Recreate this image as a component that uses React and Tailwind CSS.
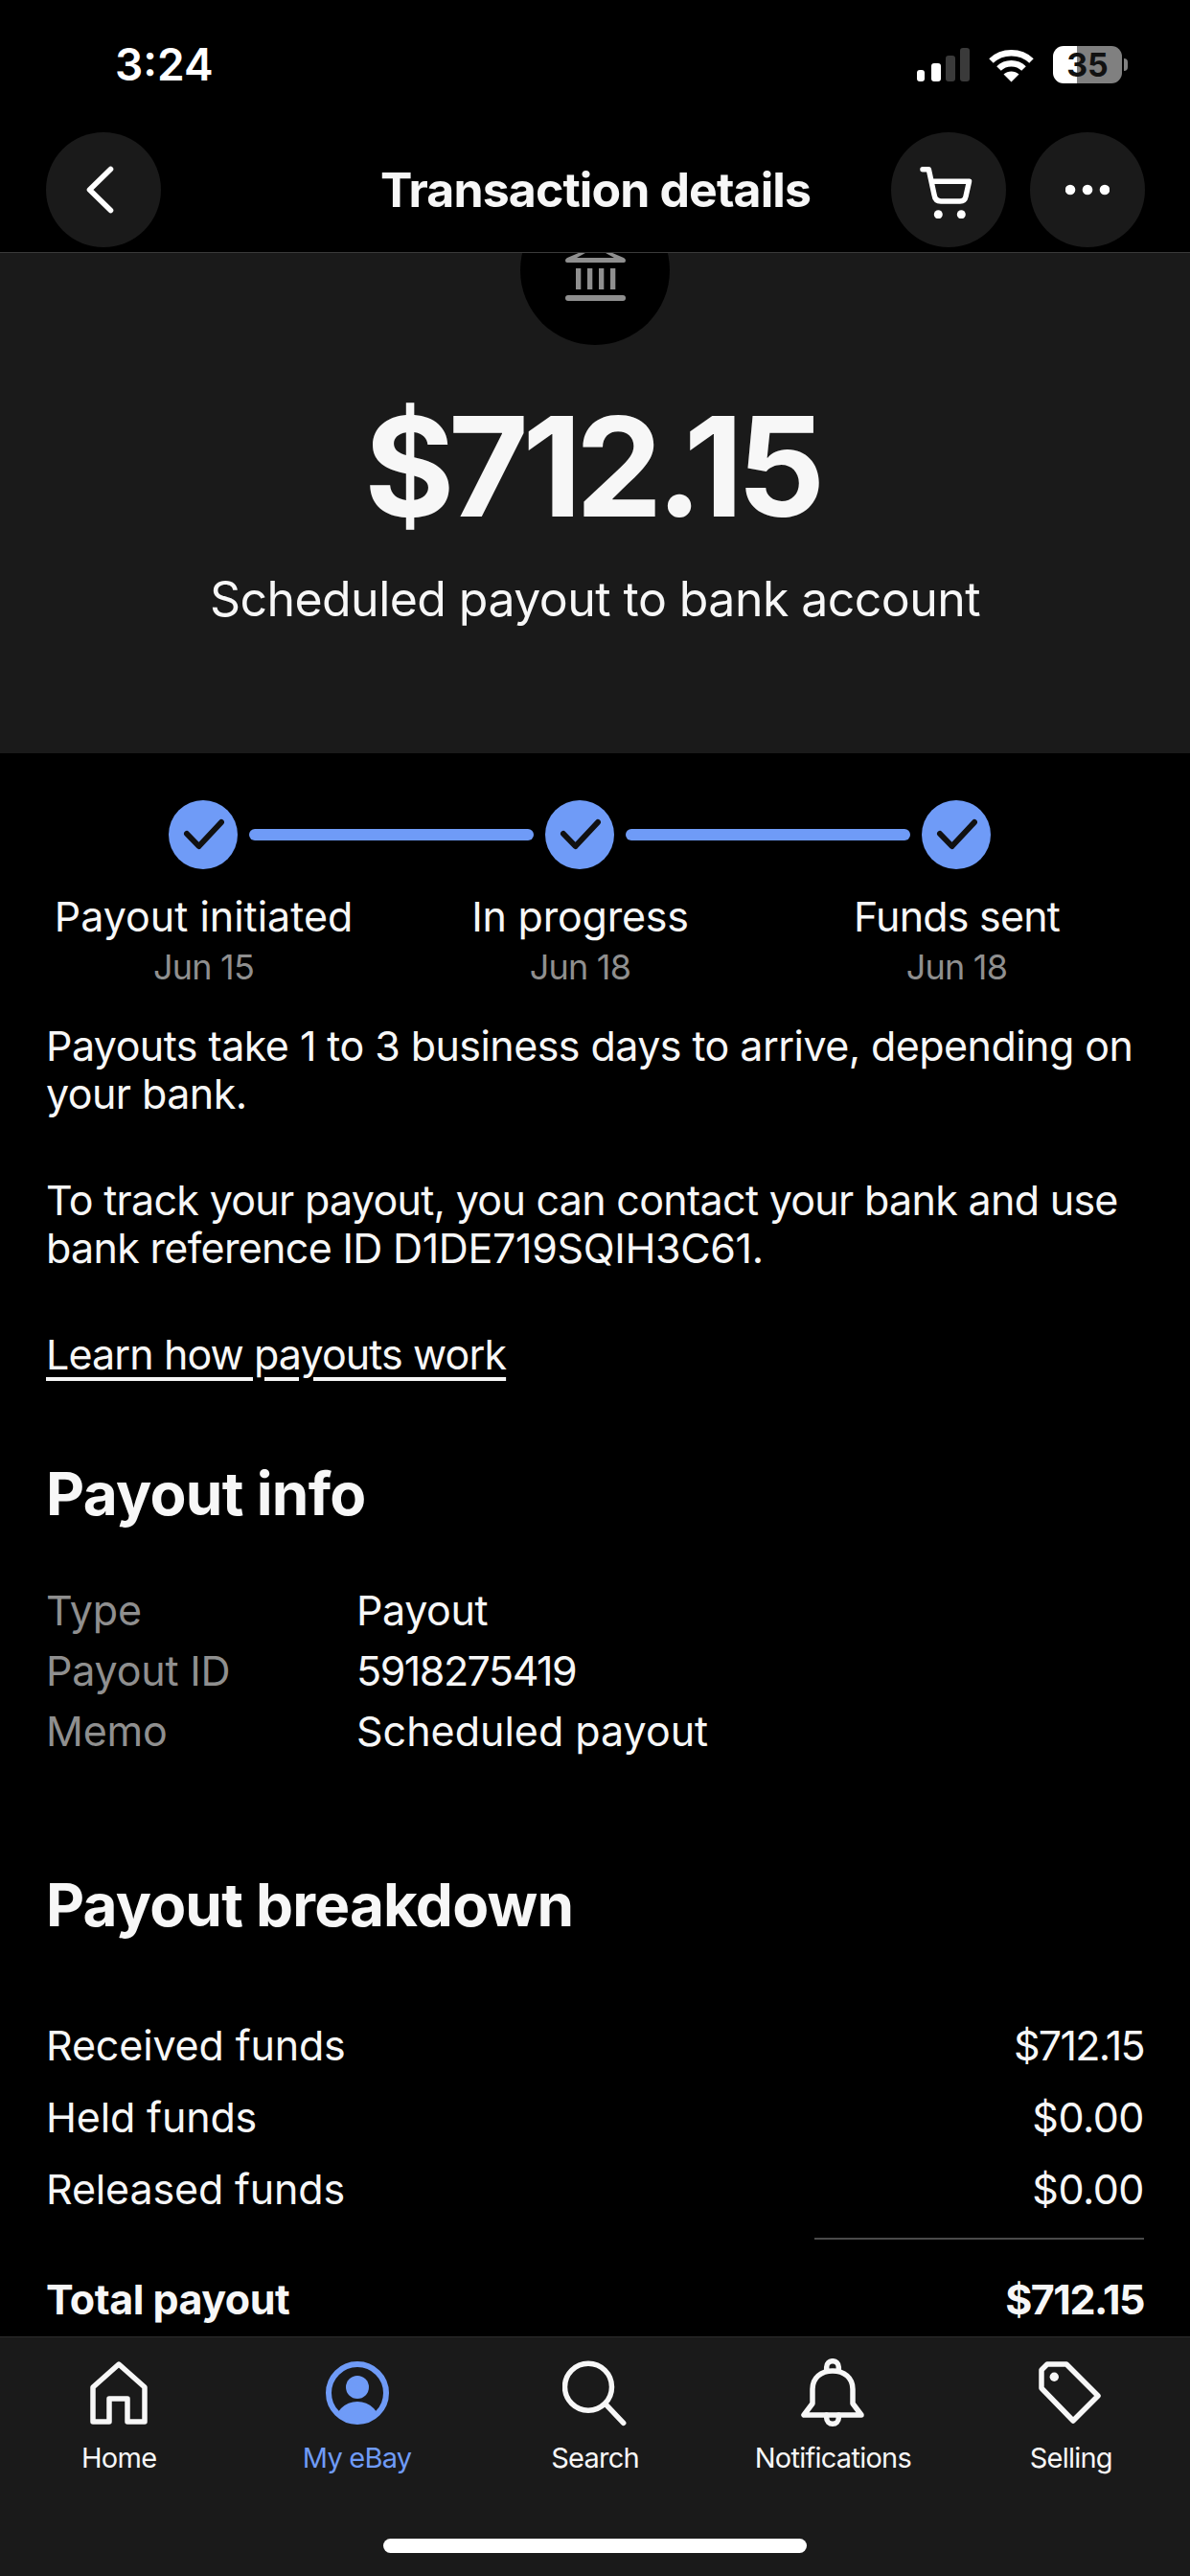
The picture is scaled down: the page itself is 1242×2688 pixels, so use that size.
import React from 'react';

const font = { fontFamily: 'Inter, "Liberation Sans", sans-serif' };

const StatusIcons = () => (
  <div className="flex items-center">
    <svg width="56" height="36" viewBox="0 0 56 36" fill="#fff">
      <rect x="1" y="23" width="8" height="12" rx="3" />
      <rect x="16" y="16" width="10" height="19" rx="3" />
      <rect x="31" y="8" width="10" height="27" rx="3" fill="#3a3a3a" />
      <rect x="46" y="0" width="10" height="35" rx="3" fill="#3a3a3a" />
    </svg>
    <svg className="ml-[20px]" width="47" height="36" viewBox="0 0 47 36" fill="none" stroke="#fff" strokeWidth="6.5">
      <path d="M2.5 13.5C14 2.5 33 2.5 44.5 13.5" />
      <path d="M10.5 21.5C17.5 14.5 29.5 14.5 36.5 21.5" />
      <path d="M23.5 35.5L15.5 27.5C20 23.5 27 23.5 31.5 27.5Z" fill="#fff" stroke="none" />
    </svg>
    <div className="ml-[20px] flex h-[39px] w-[72px] items-center justify-center rounded-[11px] bg-[linear-gradient(90deg,#fff_0,#fff_35%,#808080_35%,#808080_100%)] text-[34px] font-bold leading-none text-[#111]">
      35
    </div>
    <div className="ml-[2px] h-[13px] w-[4px] rounded-r-full bg-[#808080]" />
  </div>
);

const RoundButton = ({ children }) => (
  <div className="flex h-[120px] w-[120px] items-center justify-center rounded-full bg-[#1a1a1a]">
    {children}
  </div>
);

const Header = () => (
  <div className="border-b border-[#3a3a3a]">
    <div className="flex h-[138px] items-start justify-between pl-[120px] pr-[65px] pt-[43px]">
      <span className="text-[46px] font-semibold leading-[48px] text-white">3:24</span>
      <div className="pt-[5px]"><StatusIcons /></div>
    </div>
    <div className="grid h-[125px] grid-cols-[1fr_auto_1fr] pl-[48px] pr-[47px]">
      <RoundButton>
        <svg className="mr-[9px]" width="30" height="52" viewBox="0 0 30 52" fill="none" stroke="#fff" strokeWidth="5.6" strokeLinecap="round" strokeLinejoin="round">
          <path d="M26.5 4.5L4.5 26L26.5 47.5" />
        </svg>
      </RoundButton>
      <div className="flex h-[120px] items-center text-[50px] font-bold tracking-[-0.9px] text-[#f7f7f7]">
        Transaction details
      </div>
      <div className="flex justify-end gap-[25px]">
        <RoundButton>
          <svg width="60" height="60" viewBox="0 0 60 60" fill="none" stroke="#fff" strokeWidth="5.5" strokeLinecap="round" strokeLinejoin="round">
            <path d="M3 8.7H9.3L15 35Q16 42 22 42H42Q47 42 48 37L51.5 21.3H12.5" />
            <circle cx="19.3" cy="55.7" r="4.5" fill="#fff" stroke="none" />
            <circle cx="43.3" cy="55.7" r="4.5" fill="#fff" stroke="none" />
          </svg>
        </RoundButton>
        <RoundButton>
          <svg width="46" height="12" viewBox="0 0 46 12" fill="#fff">
            <circle cx="5" cy="6" r="5.3" />
            <circle cx="23" cy="6" r="5.3" />
            <circle cx="41" cy="6" r="5.3" />
          </svg>
        </RoundButton>
      </div>
    </div>
  </div>
);

const Hero = () => (
  <div className="flex h-[522px] flex-col items-center overflow-hidden bg-[#1a1a1a]">
    <div className="mt-[-60px] flex h-[156px] w-[156px] shrink-0 items-center justify-center rounded-full bg-black">
      <svg className="mt-[8px] overflow-visible" width="63" height="56" viewBox="0 0 63 56" fill="#8f8f8f">
        <path fillRule="evenodd" d="M31.5 -1.5L61 11Q63 12 63 14Q63 16 61 16H2Q0 16 0 14Q0 12 2 11ZM31.5 0L12 11H51Z" />
        <rect x="11" y="22" width="5.3" height="22" />
        <rect x="23" y="22" width="5.3" height="22" />
        <rect x="35" y="22" width="5.3" height="22" />
        <rect x="47" y="22" width="5.3" height="22" />
        <rect x="0" y="50" width="63" height="6" rx="3" />
      </svg>
    </div>
    <div className="mt-[52px] pr-[7px] text-[144px] font-bold leading-[150px] tracking-[-6.5px] text-[#f7f7f7]">$712.15</div>
    <div className="mt-[33px] text-[50px] leading-[60px] tracking-[-0.55px] text-[#f7f7f7]">Scheduled payout to bank account</div>
  </div>
);

const Check = () => (
  <div className="flex h-[72px] w-[72px] shrink-0 items-center justify-center rounded-full bg-[#6f9bf7]">
    <svg width="44" height="34" viewBox="0 0 44 34" fill="none" stroke="#111" strokeWidth="6" strokeLinecap="round" strokeLinejoin="round">
      <path d="M5 16L17.6 29L41 4" />
    </svg>
  </div>
);

const steps = [
  { label: 'Payout initiated', date: 'Jun 15', tracking: 'tracking-[0px]' },
  { label: 'In progress', date: 'Jun 18', tracking: 'tracking-[-0.2px]' },
  { label: 'Funds sent', date: 'Jun 18', tracking: 'tracking-[-0.8px]' },
];

const Stepper = () => (
  <div className="pt-[49px]">
    <div className="flex items-center pl-[176px]">
      <Check />
      <div className="mx-[12px] h-[12px] w-[297px] rounded-full bg-[#6f9bf7]" />
      <Check />
      <div className="mx-[12px] h-[12px] w-[297px] rounded-full bg-[#6f9bf7]" />
      <Check />
    </div>
    <div className="mt-[24px] grid grid-cols-[393px_393px_393px] pl-[16px]">
      {steps.map((s) => (
        <div key={s.label} className="text-center">
          <div className={`text-[43px] leading-[50px] text-[#f7f7f7] ${s.tracking}`}>{s.label}</div>
          <div className="mt-[6px] text-[36px] leading-[44px] tracking-[-0.8px] text-[#8f8f8f]">{s.date}</div>
        </div>
      ))}
    </div>
  </div>
);

const info = [
  ['Type', 'Payout', 'tracking-[-0.4px]'],
  ['Payout ID', '5918275419', 'tracking-[-1.5px]'],
  ['Memo', 'Scheduled payout', 'tracking-[0px]'],
];

const breakdown = [
  ['Received funds', '$712.15', 'tracking-[-1.7px]'],
  ['Held funds', '$0.00', 'tracking-[-0.5px]'],
  ['Released funds', '$0.00', 'tracking-[-0.5px]'],
];

const Body = () => (
  <div className="px-[48px] text-[#f7f7f7]">
    <p className="mt-[35px] text-[43px] leading-[50px] tracking-[-0.56px]">
      Payouts take 1 to 3 business days to arrive, depending on your bank.
    </p>
    <p className="mt-[61px] text-[43px] leading-[50px] tracking-[-0.7px]">
      To track your payout, you can contact your bank and use bank reference ID <span className="tracking-[-0.35px]">D1DE719SQIH3C61.</span>
    </p>
    <div className="mt-[61px] text-[43px] leading-[50px] tracking-[-0.9px] underline underline-offset-[8px]">Learn how payouts work</div>

    <h2 className="mt-[83px] text-[62px] font-bold leading-[76px] tracking-[-0.7px]">Payout info</h2>
    <div className="mt-[52px] grid grid-cols-[324px_1fr] text-[43px] leading-[63px]">
      {info.map(([k, v, tracking]) => (
        <React.Fragment key={k}>
          <span className="tracking-[-0.2px] text-[#8f8f8f]">{k}</span>
          <span className={tracking}>{v}</span>
        </React.Fragment>
      ))}
    </div>

    <h2 className="mt-[112px] text-[62px] font-bold leading-[76px] tracking-[-0.8px]">Payout breakdown</h2>
    <div className="mt-[71px] text-[43px] leading-[75px]">
      {breakdown.map(([k, v, tracking]) => (
        <div key={k} className="flex justify-between">
          <span className="tracking-[-0.15px]">{k}</span>
          <span className={tracking}>{v}</span>
        </div>
      ))}
    </div>
    <div className="ml-auto mt-[13px] h-[2px] w-[344px] bg-[#4a4a4a]" />
    <div className="mt-[32px] flex justify-between text-[43px] font-bold leading-[60px]">
      <span className="tracking-[-0.5px]">Total payout</span>
      <span className="tracking-[-1.5px]">$712.15</span>
    </div>
  </div>
);

const HomeIcon = () => (
  <svg width="62" height="72" viewBox="0 0 62 72" fill="none" stroke="#f7f7f7" strokeWidth="5.5" strokeLinejoin="round">
    <path d="M4 66V30L31 6L58 30V66H40V42H21V66Z" />
  </svg>
);

const PersonIcon = () => (
  <svg width="68" height="72" viewBox="0 0 68 72">
    <defs>
      <clipPath id="ring"><circle cx="34" cy="36" r="31" /></clipPath>
    </defs>
    <circle cx="34" cy="36" r="30" fill="none" stroke="#6f9bf7" strokeWidth="6" />
    <circle cx="34" cy="30" r="12" fill="#6f9bf7" />
    <circle cx="34" cy="69" r="24" fill="#6f9bf7" clipPath="url(#ring)" />
  </svg>
);

const SearchIcon = () => (
  <svg width="68" height="72" viewBox="0 0 68 72" fill="none" stroke="#f7f7f7" strokeWidth="5.5" strokeLinecap="round">
    <circle cx="27" cy="29.7" r="24.5" />
    <path d="M45.7 48.3L63.7 67.3" />
  </svg>
);

const BellIcon = () => (
  <svg width="68" height="72" viewBox="0 0 68 72" fill="none" stroke="#f7f7f7" strokeWidth="5.5" strokeLinejoin="round" strokeLinecap="round">
    <path d="M34 13C22 13 13 20 13 32V47L4 59H64L55 47V32C55 20 46 13 34 13Z" />
    <path d="M27.7 13V9A6.3 6.3 0 0 1 40.3 9V13" />
    <path d="M27.7 59V62A6.3 6.3 0 0 0 40.3 62V59" />
  </svg>
);

const TagIcon = () => (
  <svg width="68" height="72" viewBox="0 0 68 72" fill="none" stroke="#f7f7f7" strokeWidth="5.5" strokeLinejoin="round">
    <path d="M3 31V12L9 6H29L62 39L36 65Z" />
    <circle cx="16.3" cy="19.3" r="4.7" fill="#f7f7f7" stroke="none" />
  </svg>
);

const tabs = [
  { label: 'Home', icon: <HomeIcon /> },
  { label: 'My eBay', icon: <PersonIcon />, active: true },
  { label: 'Search', icon: <SearchIcon /> },
  { label: 'Notifications', icon: <BellIcon /> },
  { label: 'Selling', icon: <TagIcon /> },
];

const TabBar = () => (
  <div className="shrink-0 border-t border-[#2e2e2e] bg-[#1a1a1a] pt-[22px]">
    <div className="grid grid-cols-5">
      {tabs.map((t) => (
        <div key={t.label} className="flex flex-col items-center">
          <div className="flex h-[72px] items-center justify-center">{t.icon}</div>
          <span className={`mt-[12px] text-[29px] leading-[40px] tracking-[-0.75px] ${t.active ? 'text-[#6f9bf7]' : 'text-[#f7f7f7]'}`}>
            {t.label}
          </span>
        </div>
      ))}
    </div>
    <div className="mx-auto mt-[64px] h-[15px] w-[442px] rounded-full bg-white" />
    <div className="h-[24px]" />
  </div>
);

export default function App() {
  return (
    <div style={font} className="flex h-[2688px] w-[1242px] flex-col overflow-hidden bg-black">
      <Header />
      <div className="min-h-0 flex-1 overflow-hidden">
        <Hero />
        <Stepper />
        <Body />
      </div>
      <TabBar />
    </div>
  );
}
